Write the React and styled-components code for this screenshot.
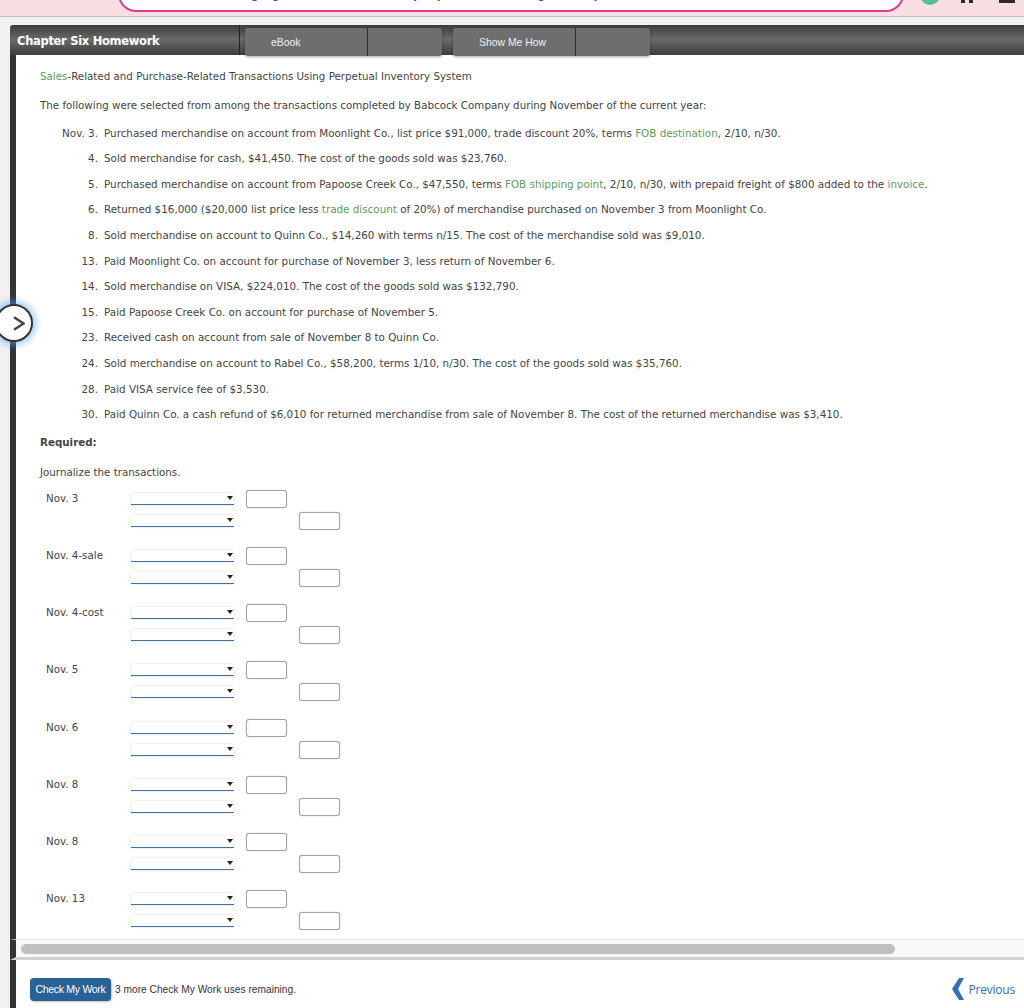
import * as React from "react";
import styled, { createGlobalStyle } from "styled-components";

const GlobalStyle = createGlobalStyle`
  html, body {
    margin: 0;
    padding: 0;
    background: #f1f1f1;
  }
  #root {
    height: 1008px;
    overflow: hidden;
  }
`;

const BrowserBar = styled.div`
  position: relative;
  display: flex;
  align-items: flex-end;
  height: 17px;
  background: #f9dfe4;
  border-bottom: 1px solid #cfb9c0;
  box-sizing: border-box;
  overflow: hidden;
`;

const UrlPill = styled.div`
  flex: none;
  width: 786px;
  height: 40px;
  margin: 0 0 4px 118px;
  padding: 0 0 0 16px;
  box-sizing: border-box;
  background: #fff;
  border: 2px solid #dc3d93;
  border-radius: 18px;
  overflow: hidden;
  font: 14px "Roboto", sans-serif;
  line-height: 39px;
  letter-spacing: 0.6px;
  color: #555;
  white-space: pre;
`;

const ExtensionDot = styled.span`
  position: absolute;
  left: 920px;
  top: -15px;
  width: 20px;
  height: 20px;
  border-radius: 50%;
  background: #52c093;
`;

const ToolbarMark = styled.span`
  position: absolute;
  left: ${p => p.$left}px;
  top: 0;
  width: ${p => p.$width}px;
  height: 3px;
  background: #2a2a2a;
`;

const Panel = styled.div`
  position: relative;
  margin: 8px 0 0 10px;
  font-family: "DejaVu Sans", Verdana, sans-serif;
  color: #444;
`;

const Header = styled.div`
  display: flex;
  align-items: flex-start;
  height: 30px;
  background: linear-gradient(#3b3b3b, #6a6a6a 48%, #3d3d3d);
  border-radius: 3px 0 0 0;
`;

const Title = styled.div`
  width: 230px;
  height: 30px;
  padding-left: 7px;
  box-sizing: border-box;
  border-right: 1px solid #222;
  font-size: 11.5px;
  font-weight: bold;
  letter-spacing: -0.3px;
  line-height: 33px;
  color: #fff;
`;

const Tab = styled.div`
  display: flex;
  width: 197px;
  height: 28px;
  margin: 3px ${p => p.$gap}px 0 5px;
  background: #6e6e6e;
  border-radius: 3px;
  box-shadow: 0 1px 3px rgba(0, 0, 0, 0.35);
  font: 10.4px "Liberation Sans", Arial, sans-serif;
  line-height: 29px;
  color: #f2f2f2;
`;

const TabLabel = styled.span`
  width: 123px;
  padding-left: 26px;
  box-sizing: border-box;
  border-right: 1px solid #2e2e2e;
`;

const Body = styled.div`
  height: 884px;
  padding: 11px 0 0 24px;
  box-sizing: border-box;
  background: #fff;
  border-left: 6px solid #333;
  font-size: 10.3px;
  line-height: 20px;
  overflow: hidden;
`;

const Paragraph = styled.div`
  margin-bottom: ${p => p.$bottom}px;
  white-space: nowrap;
`;

const Term = styled.span`
  color: #5d9c5d;
`;

const Transactions = styled.div`
  margin-bottom: 4px;
`;

const TransactionRow = styled.div`
  display: grid;
  grid-template-columns: 58px 1fr;
  column-gap: 6px;
  height: 25.6px;
  font-size: 10.36px;
  line-height: 25.6px;
  white-space: nowrap;
`;

const RowDate = styled.span`
  text-align: right;
`;

const Required = styled.div`
  margin-bottom: 10px;
  font-weight: bold;
`;

const JournalGroup = styled.div`
  display: grid;
  grid-template-columns: 85px 115px 53px 41px;
  grid-auto-rows: 22px;
  align-items: center;
  margin: 0 0 13.2px 6px;
`;

const EntryLabel = styled.span`
  grid-row: 1 / span 2;
  align-self: start;
  line-height: 21px;
`;

const SelectWrap = styled.div`
  position: relative;
  grid-column: 2;
  width: 103px;
  height: 12px;
  border-radius: 3px;
  box-shadow: 0 0 2px rgba(0, 0, 0, 0.22);

  &::after {
    content: "";
    position: absolute;
    right: 1px;
    top: 3px;
    border: 3px solid transparent;
    border-top: 4px solid #222;
    border-bottom: 0;
  }
`;

const AccountSelect = styled.select`
  display: block;
  width: 100%;
  height: 100%;
  padding: 0;
  box-sizing: border-box;
  appearance: none;
  background: #fff;
  border: 0;
  border-bottom: 1.5px solid #3f70a8;
  border-radius: 3px 3px 0 0;
`;

const AmountInput = styled.input`
  grid-column: ${p => p.$column};
  width: 41px;
  height: 18px;
  padding: 0;
  box-sizing: border-box;
  background: #fff;
  border: 1px solid #a4a4a4;
  border-radius: 3px;
  box-shadow: 0 0 1px rgba(0, 0, 0, 0.4);
`;

const ScrollTrack = styled.div`
  height: 21px;
  padding: 4px 0 0 5px;
  box-sizing: border-box;
  background: #f8f8f8;
  border-top: 1px solid #e6e6e6;
  border-bottom: 3px solid #d2d2d2;
  border-left: 6px solid #333;
`;

const ScrollThumb = styled.div`
  width: 874px;
  height: 10px;
  background: #bfbfbf;
  border-radius: 5px;
`;

const Footer = styled.div`
  display: flex;
  align-items: center;
  height: 48px;
  padding: 10px 9px 0 14px;
  box-sizing: border-box;
  background: #fff;
  border-left: 6px solid #333;
  font: 10.2px "Liberation Sans", Arial, sans-serif;
`;

const CheckButton = styled.button`
  width: 81px;
  height: 23px;
  margin-right: 4px;
  padding: 0;
  background: #2a6197;
  border: 0;
  border-radius: 4px;
  box-shadow: 1px 1px 2px rgba(0, 0, 0, 0.25);
  font: 10.5px "Liberation Sans", Arial, sans-serif;
  letter-spacing: -0.3px;
  color: #fff;
`;

const Remaining = styled.span`
  flex: 1;
  color: #333;
`;

const PreviousLink = styled.a`
  display: flex;
  align-items: center;
  gap: 4px;
  font: 12px "Open Sans", sans-serif;
  letter-spacing: -0.2px;
  color: #2f70bb;
`;

const DrawerToggle = styled.div`
  position: absolute;
  left: -15px;
  top: 279px;
  display: flex;
  align-items: center;
  justify-content: center;
  width: 38px;
  height: 38px;
  padding-left: 9px;
  box-sizing: border-box;
  background: #fff;
  border: 2.5px solid #333;
  border-radius: 50%;
  box-shadow: 0 0 7px 3px rgba(90, 170, 240, 0.6);
`;

const transactions = [
  ["Nov. 3.", <>Purchased merchandise on account from Moonlight Co., list price $91,000, trade discount 20%, terms <Term>FOB destination</Term>, 2/10, n/30.</>],
  ["4.", "Sold merchandise for cash, $41,450. The cost of the goods sold was $23,760."],
  ["5.", <>Purchased merchandise on account from Papoose Creek Co., $47,550, terms <Term>FOB shipping point</Term>, 2/10, n/30, with prepaid freight of $800 added to the <Term>invoice</Term>.</>],
  ["6.", <>Returned $16,000 ($20,000 list price less <Term>trade discount</Term> of 20%) of merchandise purchased on November 3 from Moonlight Co.</>],
  ["8.", "Sold merchandise on account to Quinn Co., $14,260 with terms n/15. The cost of the merchandise sold was $9,010."],
  ["13.", "Paid Moonlight Co. on account for purchase of November 3, less return of November 6."],
  ["14.", "Sold merchandise on VISA, $224,010. The cost of the goods sold was $132,790."],
  ["15.", "Paid Papoose Creek Co. on account for purchase of November 5."],
  ["23.", "Received cash on account from sale of November 8 to Quinn Co."],
  ["24.", "Sold merchandise on account to Rabel Co., $58,200, terms 1/10, n/30. The cost of the goods sold was $35,760."],
  ["28.", "Paid VISA service fee of $3,530."],
  ["30.", "Paid Quinn Co. a cash refund of $6,010 for returned merchandise from sale of November 8. The cost of the returned merchandise was $3,410."]
];

const entries = ["Nov. 3", "Nov. 4-sale", "Nov. 4-cost", "Nov. 5", "Nov. 6", "Nov. 8", "Nov. 8", "Nov. 13"];

const Entry = ({ label }) => (
  <JournalGroup>
    <EntryLabel>{label}</EntryLabel>
    <SelectWrap>
      <AccountSelect />
    </SelectWrap>
    <AmountInput $column={3} />
    <span />
    <SelectWrap>
      <AccountSelect />
    </SelectWrap>
    <span />
    <AmountInput $column={4} />
  </JournalGroup>
);

export default function App() {
  return (
    <>
      <GlobalStyle />
      <BrowserBar>
        <UrlPill>{"_        ezto.mhe.ag.ag.ext.main.content/by.my/ext.assets.ing.name/y"}</UrlPill>
        <ExtensionDot />
        <ToolbarMark $left={961} $width={4} />
        <ToolbarMark $left={969} $width={4} />
        <ToolbarMark $left={999} $width={16} />
      </BrowserBar>
      <Panel>
        <Header>
          <Title>Chapter Six Homework</Title>
          <Tab $gap={6}>
            <TabLabel>eBook</TabLabel>
          </Tab>
          <Tab $gap={0}>
            <TabLabel>Show Me How</TabLabel>
          </Tab>
        </Header>
        <Body>
          <Paragraph $bottom={9}>
            <Term>Sales</Term>-Related and Purchase-Related Transactions Using Perpetual Inventory System
          </Paragraph>
          <Paragraph $bottom={5.7}>
            The following were selected from among the transactions completed by Babcock Company during November of the current year:
          </Paragraph>
          <Transactions>
            {transactions.map(([date, text]) => (
              <TransactionRow key={date}>
                <RowDate>{date}</RowDate>
                <span>{text}</span>
              </TransactionRow>
            ))}
          </Transactions>
          <Required>Required:</Required>
          <Paragraph $bottom={6}>Journalize the transactions.</Paragraph>
          {entries.map((label, i) => (
            <Entry key={i} label={label} />
          ))}
        </Body>
        <ScrollTrack>
          <ScrollThumb />
        </ScrollTrack>
        <Footer>
          <CheckButton>Check My Work</CheckButton>
          <Remaining>3 more Check My Work uses remaining.</Remaining>
          <PreviousLink>
            <svg width="12" height="22" viewBox="0 0 12 22">
              <path d="M7 0h5L6 11l6 11H7L0 11z" fill="#2f70bb" />
            </svg>
            Previous
          </PreviousLink>
        </Footer>
        <DrawerToggle>
          <svg width="12" height="15" viewBox="0 0 12 15" fill="none" stroke="#444" strokeWidth="2.4">
            <path d="M1 1.2 10.5 7.5 1 13.8" />
          </svg>
        </DrawerToggle>
      </Panel>
    </>
  );
}
